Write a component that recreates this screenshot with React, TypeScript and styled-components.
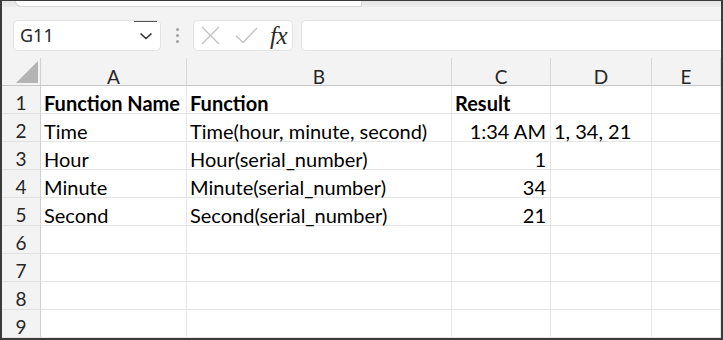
import React from "react"
import styled, { createGlobalStyle } from "styled-components"

const GlobalStyle = createGlobalStyle`
  body {
    margin: 0;
    background: #ffffff;
    font-family: Lato, "Noto Sans", sans-serif;
  }
`

const Frame = styled.div`
  width: 723px;
  height: 340px;
  box-sizing: border-box;
  border-left: 2px solid #3b3b3b;
  border-right: 2px solid #3b3b3b;
  border-bottom: 2px solid #3b3b3b;
  overflow: hidden;
  display: flex;
  flex-direction: column;
  background: #f3f3f3;
`

const TopStrip = styled.div`
  height: 7px;
  display: flex;
  background: linear-gradient(#e4e4e4, #ececec);
  border-top: 1px solid #3b3b3b;
  box-sizing: border-box;
  padding-left: 13px;
`

const RibbonTail = styled.div`
  width: 345px;
  background: #ffffff;
  border: 1px solid #d6d6d6;
  border-top: none;
  border-radius: 0 0 0 6px;
`

const FormulaBar = styled.div`
  height: 54px;
  box-sizing: border-box;
  padding: 13px 0 0 11px;
  display: flex;
  align-items: flex-start;
  background: #f3f3f3;
`

const Box = styled.div<{ $width?: number; $grow?: boolean }>`
  height: 31px;
  box-sizing: border-box;
  background: #ffffff;
  border: 1px solid #e3e3e3;
  border-radius: 5px;
  display: flex;
  align-items: center;
  position: relative;
  width: ${(p) => (p.$width ? `${p.$width}px` : "auto")};
  flex: ${(p) => (p.$grow ? 1 : "none")};
  ${(p) => (p.$grow ? "border-right: none; border-radius: 5px 0 0 5px;" : "")}
`

const NameText = styled.span`
  font-family: "Noto Sans", sans-serif;
  font-size: 18px;
  color: #262626;
  padding-left: 6px;
  flex: 1;
`

const DropButton = styled.div`
  width: 23px;
  height: 29px;
  margin-right: 3px;
  display: flex;
  align-items: center;
  justify-content: center;
  border-top: 1px solid #555555;
  box-sizing: border-box;
`

const Dots = styled.div`
  width: 32px;
  height: 31px;
  display: flex;
  flex-direction: column;
  align-items: center;
  justify-content: center;
  gap: 3px;
`

const Dot = styled.span`
  width: 3px;
  height: 3px;
  border-radius: 50%;
  background: #a0a0a0;
`

const FnBox = styled(Box)`
  padding: 0 5px 0 7px;
  gap: 15px;
  margin-right: 8px;
`

const Fx = styled.span`
  font-family: "Liberation Serif", serif;
  font-style: italic;
  font-size: 25px;
  color: #2b2b2b;
  letter-spacing: -0.5px;
  margin-left: -3px;
  line-height: 1;
`

const Grid = styled.div`
  display: grid;
  grid-template-columns: 39px 146px 265px 99px 101px 69px;
  grid-auto-rows: 28px;
  background: #ffffff;
  font-family: Lato, "Noto Sans", sans-serif;
  font-size: 20px;
  line-height: 20px;
  color: #000000;
`

const Corner = styled.div`
  background: #f3f3f3;
  border-right: 1px solid #d0d0d0;
  border-bottom: 1px solid #c6c6c6;
  display: flex;
  align-items: flex-end;
  justify-content: flex-end;
  padding: 0 2px 2px 0;
`

const ColHead = styled.div`
  background: #f3f3f3;
  border-right: 1px solid #d8d8d8;
  border-bottom: 1px solid #c6c6c6;
  display: flex;
  align-items: flex-end;
  justify-content: center;
  box-sizing: border-box;
  color: #262626;
  font-size: 19px;
  line-height: 16px;
`

const RowHead = styled.div`
  background: #f3f3f3;
  border-right: 1px solid #d0d0d0;
  border-bottom: 1px solid #e1e1e1;
  display: flex;
  align-items: flex-end;
  justify-content: center;
  box-sizing: border-box;
  color: #262626;
  font-size: 19px;
`

const Cell = styled.div<{ $bold?: boolean; $right?: boolean }>`
  border-right: 1px solid #e6e6e6;
  border-bottom: 1px solid #e6e6e6;
  display: flex;
  align-items: flex-end;
  justify-content: ${(p) => (p.$right ? "flex-end" : "flex-start")};
  padding: 0 4px 0 3px;
  box-sizing: border-box;
  white-space: nowrap;
  font-weight: ${(p) => (p.$bold ? 700 : 400)};
`

const columns = ["A", "B", "C", "D", "E"]

type CellData = { text: string; bold?: boolean; right?: boolean }

const empty: CellData[] = [{ text: "" }, { text: "" }, { text: "" }, { text: "" }, { text: "" }]

const rows: CellData[][] = [
  [
    { text: "Function Name", bold: true },
    { text: "Function", bold: true },
    { text: "Result", bold: true },
    { text: "" },
    { text: "" },
  ],
  [
    { text: "Time" },
    { text: "Time(hour, minute, second)" },
    { text: "1:34 AM", right: true },
    { text: "1, 34, 21" },
    { text: "" },
  ],
  [{ text: "Hour" }, { text: "Hour(serial_number)" }, { text: "1", right: true }, { text: "" }, { text: "" }],
  [{ text: "Minute" }, { text: "Minute(serial_number)" }, { text: "34", right: true }, { text: "" }, { text: "" }],
  [{ text: "Second" }, { text: "Second(serial_number)" }, { text: "21", right: true }, { text: "" }, { text: "" }],
  empty,
  empty,
  empty,
  empty,
]

export default function App() {
  return (
    <>
      <GlobalStyle />
      <Frame>
        <TopStrip>
          <RibbonTail />
        </TopStrip>
        <FormulaBar>
          <Box $width={148}>
            <NameText>G11</NameText>
            <DropButton>
              <svg width="14" height="8" viewBox="0 0 14 8">
                <path d="M1.5 1.5 L7 6.5 L12.5 1.5" fill="none" stroke="#2b2b2b" strokeWidth="1.5" />
              </svg>
            </DropButton>
          </Box>
          <Dots>
            <Dot />
            <Dot />
            <Dot />
          </Dots>
          <FnBox>
            <svg width="19" height="19" viewBox="0 0 19 19">
              <path d="M1 1 L18 18 M18 1 L1 18" stroke="#c2c2c2" strokeWidth="1.3" fill="none" />
            </svg>
            <svg width="23" height="17" viewBox="0 0 23 17">
              <path d="M1 8.5 L8 15.5 L22 1" stroke="#c2c2c2" strokeWidth="1.3" fill="none" />
            </svg>
            <Fx>fx</Fx>
          </FnBox>
          <Box $grow />
        </FormulaBar>
        <Grid>
          <Corner>
            <svg width="22" height="22" viewBox="0 0 22 22">
              <path d="M22 0 L22 22 L0 22 Z" fill="#b4b4b4" />
            </svg>
          </Corner>
          {columns.map((c) => (
            <ColHead key={c}>{c}</ColHead>
          ))}
          {rows.map((row, i) => (
            <React.Fragment key={i}>
              <RowHead>{i + 1}</RowHead>
              {row.map((cell, j) => (
                <Cell key={j} $bold={cell.bold} $right={cell.right}>
                  {cell.text}
                </Cell>
              ))}
            </React.Fragment>
          ))}
        </Grid>
      </Frame>
    </>
  )
}
